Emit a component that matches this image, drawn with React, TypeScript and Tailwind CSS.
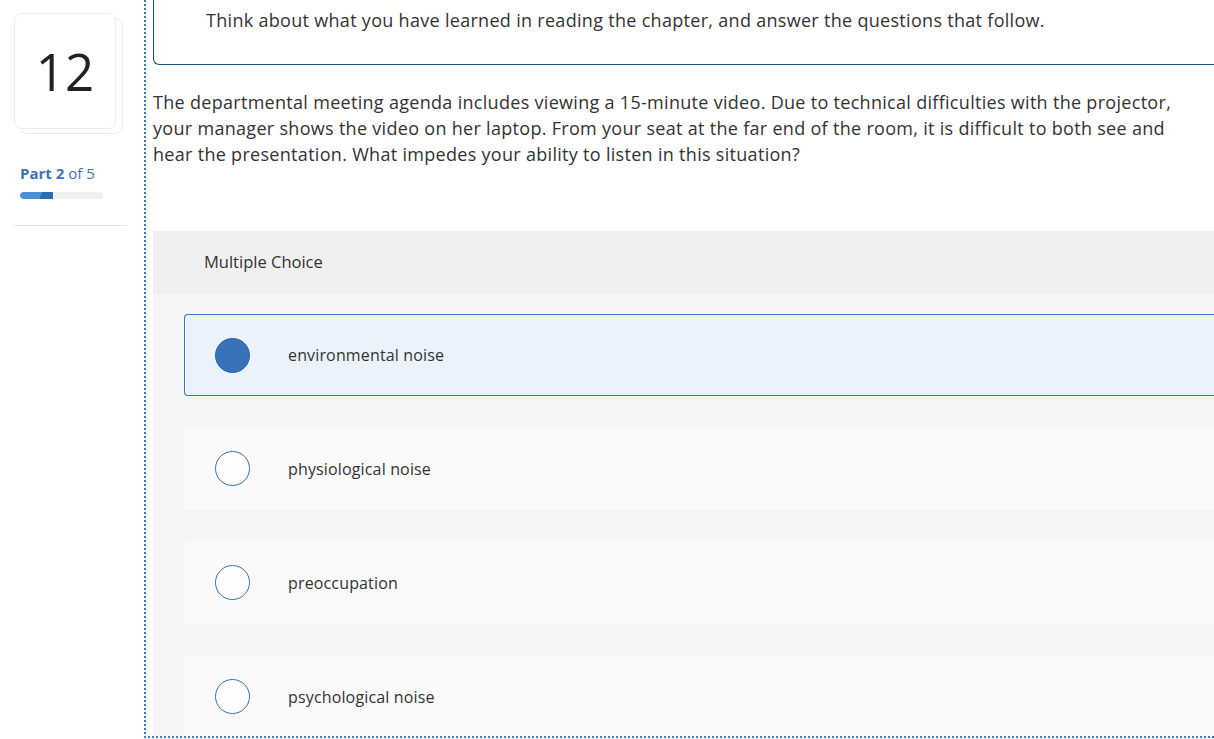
const options = [
  { label: 'environmental noise', selected: true },
  { label: 'physiological noise', selected: false },
  { label: 'preoccupation', selected: false },
  { label: 'psychological noise', selected: false },
];

function Sidebar() {
  return (
    <div className="w-[144px] shrink-0 pt-[13px]">
      <div className="relative ml-[14px] h-[116px] w-[102px]">
        <div className="absolute left-[5px] top-[5px] h-[116px] w-[104px] rounded-lg border border-[#ececec] bg-white" />
        <div className="absolute inset-0 flex items-center justify-center rounded-lg border border-[#ececec] bg-white">
          <span className="text-[51px] leading-none text-[#222]">12</span>
        </div>
      </div>
      <div className="ml-[20px] mt-[34px] text-[15px] leading-5 text-[#3b73b9]">
        <span className="font-bold">Part 2</span> of 5
      </div>
      <div className="ml-[20px] mt-[9px] h-[7px] w-[83px] overflow-hidden rounded-full bg-[#f0f0f0]">
        <div className="h-full w-[33px] rounded-l-full bg-[linear-gradient(115deg,#4a90d9_62%,#2e6db4_62%)]" />
      </div>
      <div className="ml-[14px] mt-[26px] h-px w-[113px] bg-[#e6e6e6]" />
    </div>
  );
}

function Option({ label, selected }: { label: string; selected: boolean }) {
  return (
    <div
      className={
        selected
          ? 'flex h-[82px] items-center rounded-l border border-r-0 border-[#3b78c4] bg-[#eaf2fb] pl-[30px]'
          : 'flex h-[83px] items-center rounded-l bg-[#fafafa] pl-[31px]'
      }
    >
      {selected ? (
        <div className="h-[35px] w-[35px] rounded-full border border-[#2d609f] bg-[#3873b9]" />
      ) : (
        <div className="h-[35px] w-[35px] rounded-full border border-[#3a6ea8] bg-white" />
      )}
      <span className="ml-[38px] text-[16px] tracking-[0.15px] text-[#333]">{label}</span>
    </div>
  );
}

export default function App() {
  return (
    <div
      className="flex h-[739px] w-[1214px] overflow-hidden bg-white"
      style={{ fontFamily: '"Open Sans", Arial, sans-serif' }}
    >
      <Sidebar />
      <div className="h-[738px] min-w-0 flex-1 overflow-hidden border-b-2 border-l-2 border-dotted border-[#3b78c4] pl-[7px]">
        <div className="-mt-px h-[66px] w-[1100px] rounded-bl-md border border-r-0 border-[#1f4e85] pl-[52px] pt-[8px]">
          <p className="text-[18px] leading-6 tracking-[0.3px] text-[#333]">
            Think about what you have learned in reading the chapter, and answer the questions that follow.
          </p>
        </div>
        <p className="mt-[24px] text-[18px] leading-[26px] tracking-[0.3px] text-[#333]">
          The departmental meeting agenda includes viewing a 15-minute video. Due to technical difficulties with the projector,
          <br />
          your manager shows the video on her laptop. From your seat at the far end of the room, it is difficult to both see and
          <br />
          hear the presentation. What impedes your ability to listen in this situation?
        </p>
        <div className="mt-[64px] bg-[#f5f5f5]">
          <div className="flex h-[63px] items-center bg-[#f0f0f0] pl-[51px] text-[16.5px] text-[#333]">
            Multiple Choice
          </div>
          <div className="flex flex-col gap-[31px] pl-[31px] pt-[20px] pb-[20px]">
            {options.map((o) => (
              <Option key={o.label} label={o.label} selected={o.selected} />
            ))}
          </div>
        </div>
      </div>
    </div>
  );
}
